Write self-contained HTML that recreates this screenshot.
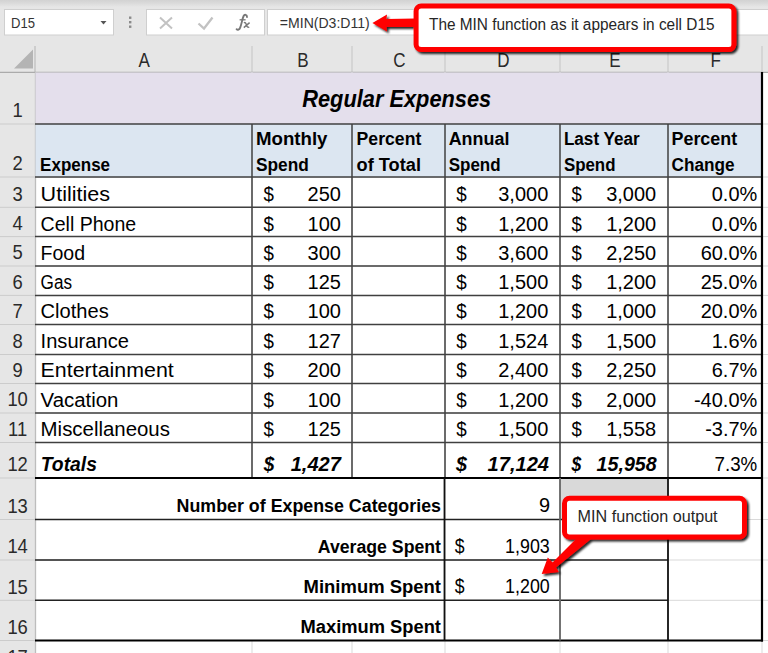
<!DOCTYPE html>
<html><head><meta charset="utf-8"><title>Regular Expenses</title>
<style>html,body{margin:0;padding:0;background:#fff;width:768px;height:653px;overflow:hidden}svg{display:block}</style>
</head><body>
<svg width="768" height="653" viewBox="0 0 768 653" font-family="Liberation Sans, sans-serif">
<defs><linearGradient id="tg" x1="0" y1="0" x2="0" y2="1"><stop offset="0" stop-color="#d2d2d2"/><stop offset="0.35" stop-color="#d8d8d8"/><stop offset="1" stop-color="#e6e6e6"/></linearGradient><filter id="sh" x="-10%" y="-30%" width="130%" height="170%"><feGaussianBlur in="SourceAlpha" stdDeviation="1.1"/><feOffset dx="1.6" dy="1.8" result="b"/><feFlood flood-color="#000" flood-opacity="0.85"/><feComposite in2="b" operator="in"/><feMerge><feMergeNode/><feMergeNode in="SourceGraphic"/></feMerge></filter></defs>
<rect x="0" y="0" width="768" height="653" fill="#e6e6e6"/>
<rect x="0" y="0" width="768" height="7" fill="url(#tg)"/>
<rect x="35" y="72" width="733" height="581" fill="#ffffff"/>
<rect x="4.5" y="9.5" width="109" height="25.5" fill="#ffffff" stroke="#cfcfcf" stroke-width="1"/>
<rect x="146.5" y="9.5" width="118" height="25.5" fill="#ffffff" stroke="#cfcfcf" stroke-width="1"/>
<rect x="267.5" y="9.5" width="510" height="25.5" fill="#ffffff" stroke="#cfcfcf" stroke-width="1"/>
<path d="M100.5,21 L106.5,21 L103.5,24.5 Z" fill="#555"/>
<rect x="129" y="16.5" width="2.4" height="2.4" fill="#8a8a8a"/>
<rect x="129" y="21" width="2.4" height="2.4" fill="#8a8a8a"/>
<rect x="129" y="25.5" width="2.4" height="2.4" fill="#8a8a8a"/>
<path d="M160,17.5 L172,28.5 M172,17.5 L160,28.5" stroke="#c2c2c2" stroke-width="2" fill="none"/>
<path d="M198.5,23.5 L204,28.5 L212.5,17.5" stroke="#c2c2c2" stroke-width="2.3" fill="none"/>
<path d="M247,17 C247,14.6 244.6,14 243.6,16 C242.4,18.4 241.6,24 240.2,27.6 C239.3,29.8 237.6,30.4 236.6,29.2" stroke="#787878" stroke-width="1.9" fill="none" stroke-linecap="round"/>
<path d="M239.6,19.8 L245.6,19.8" stroke="#787878" stroke-width="1.3" fill="none"/>
<path d="M243.9,22.8 C245.3,22 246,23.2 246.5,25 C247,26.8 247.8,27.8 249.3,27 M249.6,22.6 L243.8,27.6" stroke="#787878" stroke-width="1.4" fill="none"/>
<text x="11.00" y="27.70" font-size="14.60" fill="#333" textLength="23.99" lengthAdjust="spacingAndGlyphs">D15</text>
<text x="279.80" y="27.50" font-size="14.60" fill="#333" textLength="89.99" lengthAdjust="spacingAndGlyphs">=MIN(D3:D11)</text>
<line x1="252" y1="46" x2="252" y2="72" stroke="#c4c4c4" stroke-width="1"/>
<line x1="352" y1="46" x2="352" y2="72" stroke="#c4c4c4" stroke-width="1"/>
<line x1="445" y1="46" x2="445" y2="72" stroke="#c4c4c4" stroke-width="1"/>
<line x1="560" y1="46" x2="560" y2="72" stroke="#c4c4c4" stroke-width="1"/>
<line x1="668" y1="46" x2="668" y2="72" stroke="#c4c4c4" stroke-width="1"/>
<line x1="762" y1="46" x2="762" y2="72" stroke="#c4c4c4" stroke-width="1"/>
<line x1="35" y1="46" x2="35" y2="72" stroke="#bdbdbd" stroke-width="1.2"/>
<line x1="0" y1="72.4" x2="768" y2="72.4" stroke="#ababab" stroke-width="1.3"/>
<path d="M33,49.5 L33,68.5 L14,68.5 Z" fill="#b4b4b4"/>
<text x="138.60" y="66.80" font-size="19.80" fill="#2a2a2a" textLength="11.36" lengthAdjust="spacingAndGlyphs">A</text>
<text x="297.14" y="66.80" font-size="19.80" fill="#2a2a2a" textLength="11.36" lengthAdjust="spacingAndGlyphs">B</text>
<text x="393.17" y="66.80" font-size="19.80" fill="#2a2a2a" textLength="12.30" lengthAdjust="spacingAndGlyphs">C</text>
<text x="497.17" y="66.80" font-size="19.80" fill="#2a2a2a" textLength="12.30" lengthAdjust="spacingAndGlyphs">D</text>
<text x="609.14" y="66.80" font-size="19.80" fill="#2a2a2a" textLength="11.36" lengthAdjust="spacingAndGlyphs">E</text>
<text x="710.61" y="66.80" font-size="19.80" fill="#2a2a2a" textLength="10.40" lengthAdjust="spacingAndGlyphs">F</text>
<line x1="35.5" y1="72" x2="35.5" y2="653" stroke="#bdbdbd" stroke-width="1.3"/>
<line x1="0" y1="124" x2="35" y2="124" stroke="#cccccc" stroke-width="1"/>
<line x1="0" y1="177" x2="35" y2="177" stroke="#cccccc" stroke-width="1"/>
<line x1="0" y1="207.3" x2="35" y2="207.3" stroke="#cccccc" stroke-width="1"/>
<line x1="0" y1="236.6" x2="35" y2="236.6" stroke="#cccccc" stroke-width="1"/>
<line x1="0" y1="266" x2="35" y2="266" stroke="#cccccc" stroke-width="1"/>
<line x1="0" y1="295.4" x2="35" y2="295.4" stroke="#cccccc" stroke-width="1"/>
<line x1="0" y1="324.5" x2="35" y2="324.5" stroke="#cccccc" stroke-width="1"/>
<line x1="0" y1="354.5" x2="35" y2="354.5" stroke="#cccccc" stroke-width="1"/>
<line x1="0" y1="383.5" x2="35" y2="383.5" stroke="#cccccc" stroke-width="1"/>
<line x1="0" y1="413" x2="35" y2="413" stroke="#cccccc" stroke-width="1"/>
<line x1="0" y1="442.5" x2="35" y2="442.5" stroke="#cccccc" stroke-width="1"/>
<line x1="0" y1="478" x2="35" y2="478" stroke="#cccccc" stroke-width="1"/>
<line x1="0" y1="519.5" x2="35" y2="519.5" stroke="#cccccc" stroke-width="1"/>
<line x1="0" y1="560" x2="35" y2="560" stroke="#cccccc" stroke-width="1"/>
<line x1="0" y1="600.3" x2="35" y2="600.3" stroke="#cccccc" stroke-width="1"/>
<line x1="0" y1="640.5" x2="35" y2="640.5" stroke="#cccccc" stroke-width="1"/>
<line x1="0" y1="670.3" x2="35" y2="670.3" stroke="#cccccc" stroke-width="1"/>
<text x="12.49" y="117.40" font-size="19.80" fill="#2a2a2a" textLength="10.24" lengthAdjust="spacingAndGlyphs">1</text>
<text x="12.49" y="170.40" font-size="19.80" fill="#2a2a2a" textLength="10.24" lengthAdjust="spacingAndGlyphs">2</text>
<text x="12.49" y="200.70" font-size="19.80" fill="#2a2a2a" textLength="10.24" lengthAdjust="spacingAndGlyphs">3</text>
<text x="12.49" y="230.00" font-size="19.80" fill="#2a2a2a" textLength="10.24" lengthAdjust="spacingAndGlyphs">4</text>
<text x="12.49" y="259.40" font-size="19.80" fill="#2a2a2a" textLength="10.24" lengthAdjust="spacingAndGlyphs">5</text>
<text x="12.49" y="288.80" font-size="19.80" fill="#2a2a2a" textLength="10.24" lengthAdjust="spacingAndGlyphs">6</text>
<text x="12.49" y="317.90" font-size="19.80" fill="#2a2a2a" textLength="10.24" lengthAdjust="spacingAndGlyphs">7</text>
<text x="12.49" y="347.90" font-size="19.80" fill="#2a2a2a" textLength="10.24" lengthAdjust="spacingAndGlyphs">8</text>
<text x="12.49" y="376.90" font-size="19.80" fill="#2a2a2a" textLength="10.24" lengthAdjust="spacingAndGlyphs">9</text>
<text x="7.38" y="406.40" font-size="19.80" fill="#2a2a2a" textLength="20.48" lengthAdjust="spacingAndGlyphs">10</text>
<text x="8.02" y="435.90" font-size="19.80" fill="#2a2a2a" textLength="19.12" lengthAdjust="spacingAndGlyphs">11</text>
<text x="7.38" y="471.40" font-size="19.80" fill="#2a2a2a" textLength="20.48" lengthAdjust="spacingAndGlyphs">12</text>
<text x="7.38" y="512.90" font-size="19.80" fill="#2a2a2a" textLength="20.48" lengthAdjust="spacingAndGlyphs">13</text>
<text x="7.38" y="553.40" font-size="19.80" fill="#2a2a2a" textLength="20.48" lengthAdjust="spacingAndGlyphs">14</text>
<text x="7.38" y="593.70" font-size="19.80" fill="#2a2a2a" textLength="20.48" lengthAdjust="spacingAndGlyphs">15</text>
<text x="7.38" y="633.90" font-size="19.80" fill="#2a2a2a" textLength="20.48" lengthAdjust="spacingAndGlyphs">16</text>
<text x="7.38" y="663.70" font-size="19.80" fill="#2a2a2a" textLength="20.48" lengthAdjust="spacingAndGlyphs">17</text>
<line x1="35" y1="124" x2="768" y2="124" stroke="#d9d9d9" stroke-width="1"/>
<line x1="35" y1="177" x2="768" y2="177" stroke="#d9d9d9" stroke-width="1"/>
<line x1="35" y1="207.3" x2="768" y2="207.3" stroke="#d9d9d9" stroke-width="1"/>
<line x1="35" y1="236.6" x2="768" y2="236.6" stroke="#d9d9d9" stroke-width="1"/>
<line x1="35" y1="266" x2="768" y2="266" stroke="#d9d9d9" stroke-width="1"/>
<line x1="35" y1="295.4" x2="768" y2="295.4" stroke="#d9d9d9" stroke-width="1"/>
<line x1="35" y1="324.5" x2="768" y2="324.5" stroke="#d9d9d9" stroke-width="1"/>
<line x1="35" y1="354.5" x2="768" y2="354.5" stroke="#d9d9d9" stroke-width="1"/>
<line x1="35" y1="383.5" x2="768" y2="383.5" stroke="#d9d9d9" stroke-width="1"/>
<line x1="35" y1="413" x2="768" y2="413" stroke="#d9d9d9" stroke-width="1"/>
<line x1="35" y1="442.5" x2="768" y2="442.5" stroke="#d9d9d9" stroke-width="1"/>
<line x1="35" y1="478" x2="768" y2="478" stroke="#d9d9d9" stroke-width="1"/>
<line x1="35" y1="519.5" x2="768" y2="519.5" stroke="#d9d9d9" stroke-width="1"/>
<line x1="35" y1="560" x2="768" y2="560" stroke="#d9d9d9" stroke-width="1"/>
<line x1="35" y1="600.3" x2="768" y2="600.3" stroke="#d9d9d9" stroke-width="1"/>
<line x1="35" y1="640.5" x2="768" y2="640.5" stroke="#d9d9d9" stroke-width="1"/>
<line x1="35" y1="670.3" x2="768" y2="670.3" stroke="#d9d9d9" stroke-width="1"/>
<line x1="252" y1="72" x2="252" y2="478" stroke="#d9d9d9" stroke-width="1"/>
<line x1="252" y1="641" x2="252" y2="653" stroke="#d9d9d9" stroke-width="1"/>
<line x1="352" y1="72" x2="352" y2="478" stroke="#d9d9d9" stroke-width="1"/>
<line x1="352" y1="641" x2="352" y2="653" stroke="#d9d9d9" stroke-width="1"/>
<line x1="445" y1="72" x2="445" y2="653" stroke="#d9d9d9" stroke-width="1"/>
<line x1="560" y1="72" x2="560" y2="653" stroke="#d9d9d9" stroke-width="1"/>
<line x1="668" y1="72" x2="668" y2="653" stroke="#d9d9d9" stroke-width="1"/>
<line x1="762" y1="72" x2="762" y2="653" stroke="#d9d9d9" stroke-width="1"/>
<rect x="35.5" y="72.5" width="726.5" height="51.5" fill="#e4dfec"/>
<rect x="35.5" y="124" width="726.5" height="53" fill="#dce6f1"/>
<rect x="560" y="478" width="108" height="41.5" fill="#d9d9d9"/>
<line x1="35" y1="124" x2="762" y2="124" stroke="#404040" stroke-width="1.6"/>
<line x1="35" y1="177" x2="762" y2="177" stroke="#404040" stroke-width="1.6"/>
<line x1="35" y1="207.3" x2="762" y2="207.3" stroke="#404040" stroke-width="1.5"/>
<line x1="35" y1="236.6" x2="762" y2="236.6" stroke="#404040" stroke-width="1.5"/>
<line x1="35" y1="266" x2="762" y2="266" stroke="#404040" stroke-width="1.5"/>
<line x1="35" y1="295.4" x2="762" y2="295.4" stroke="#404040" stroke-width="1.5"/>
<line x1="35" y1="324.5" x2="762" y2="324.5" stroke="#404040" stroke-width="1.5"/>
<line x1="35" y1="354.5" x2="762" y2="354.5" stroke="#404040" stroke-width="1.5"/>
<line x1="35" y1="383.5" x2="762" y2="383.5" stroke="#404040" stroke-width="1.5"/>
<line x1="35" y1="413" x2="762" y2="413" stroke="#404040" stroke-width="1.5"/>
<line x1="35" y1="442.5" x2="762" y2="442.5" stroke="#404040" stroke-width="1.5"/>
<line x1="252" y1="124" x2="252" y2="478" stroke="#404040" stroke-width="1.5"/>
<line x1="352" y1="124" x2="352" y2="478" stroke="#404040" stroke-width="1.5"/>
<line x1="445" y1="124" x2="445" y2="478" stroke="#404040" stroke-width="1.5"/>
<line x1="560" y1="124" x2="560" y2="478" stroke="#404040" stroke-width="1.5"/>
<line x1="668" y1="124" x2="668" y2="478" stroke="#404040" stroke-width="1.5"/>
<line x1="35" y1="478" x2="763" y2="478" stroke="#000" stroke-width="2.2"/>
<line x1="35" y1="640.5" x2="763" y2="640.5" stroke="#000" stroke-width="2.2"/>
<line x1="35" y1="519.5" x2="668" y2="519.5" stroke="#222" stroke-width="1.6"/>
<line x1="35" y1="560" x2="668" y2="560" stroke="#222" stroke-width="1.6"/>
<line x1="35" y1="600.3" x2="668" y2="600.3" stroke="#222" stroke-width="1.6"/>
<line x1="444.5" y1="478" x2="444.5" y2="640.5" stroke="#111" stroke-width="1.8"/>
<line x1="560" y1="478" x2="560" y2="640.5" stroke="#666" stroke-width="1.8"/>
<line x1="668" y1="478" x2="668" y2="640.5" stroke="#111" stroke-width="1.8"/>
<line x1="762" y1="72" x2="762" y2="641.5" stroke="#000" stroke-width="2.2"/>
<text x="302.25" y="107.00" font-size="23.60" font-weight="bold" font-style="italic" fill="#000" textLength="188.96" lengthAdjust="spacingAndGlyphs">Regular Expenses</text>
<text x="40.10" y="171.10" font-size="18.80" font-weight="bold" fill="#000" textLength="69.97" lengthAdjust="spacingAndGlyphs">Expense</text>
<text x="256.00" y="145.00" font-size="18.80" font-weight="bold" fill="#000" textLength="71.46" lengthAdjust="spacingAndGlyphs">Monthly</text>
<text x="256.00" y="170.60" font-size="18.80" font-weight="bold" fill="#000" textLength="52.85" lengthAdjust="spacingAndGlyphs">Spend</text>
<text x="356.60" y="145.00" font-size="18.80" font-weight="bold" fill="#000" textLength="64.68" lengthAdjust="spacingAndGlyphs">Percent</text>
<text x="356.60" y="170.60" font-size="18.80" font-weight="bold" fill="#000" textLength="64.42" lengthAdjust="spacingAndGlyphs">of Total</text>
<text x="448.70" y="145.00" font-size="18.80" font-weight="bold" fill="#000" textLength="60.68" lengthAdjust="spacingAndGlyphs">Annual</text>
<text x="448.70" y="170.60" font-size="18.80" font-weight="bold" fill="#000" textLength="51.91" lengthAdjust="spacingAndGlyphs">Spend</text>
<text x="563.90" y="145.00" font-size="18.80" font-weight="bold" fill="#000" textLength="75.79" lengthAdjust="spacingAndGlyphs">Last Year</text>
<text x="563.90" y="170.60" font-size="18.80" font-weight="bold" fill="#000" textLength="51.61" lengthAdjust="spacingAndGlyphs">Spend</text>
<text x="671.50" y="145.00" font-size="18.80" font-weight="bold" fill="#000" textLength="65.67" lengthAdjust="spacingAndGlyphs">Percent</text>
<text x="671.50" y="170.60" font-size="18.80" font-weight="bold" fill="#000" textLength="63.04" lengthAdjust="spacingAndGlyphs">Change</text>
<text x="40.60" y="201.20" font-size="19.40" fill="#000" textLength="69.45" lengthAdjust="spacingAndGlyphs">Utilities</text>
<text x="263.60" y="201.20" font-size="19.40" fill="#000" textLength="10.42" lengthAdjust="spacingAndGlyphs">$</text>
<text x="307.63" y="201.20" font-size="19.40" fill="#000" textLength="33.34" lengthAdjust="spacingAndGlyphs">250</text>
<text x="456.25" y="201.20" font-size="19.40" fill="#000" textLength="10.47" lengthAdjust="spacingAndGlyphs">$</text>
<text x="498.25" y="201.20" font-size="19.40" fill="#000" textLength="50.00" lengthAdjust="spacingAndGlyphs">3,000</text>
<text x="571.40" y="201.20" font-size="19.40" fill="#000" textLength="10.32" lengthAdjust="spacingAndGlyphs">$</text>
<text x="606.15" y="201.20" font-size="19.40" fill="#000" textLength="50.00" lengthAdjust="spacingAndGlyphs">3,000</text>
<text x="711.74" y="201.20" font-size="19.40" fill="#000" textLength="45.54" lengthAdjust="spacingAndGlyphs">0.0%</text>
<text x="40.60" y="230.50" font-size="19.40" fill="#000" textLength="95.64" lengthAdjust="spacingAndGlyphs">Cell Phone</text>
<text x="263.60" y="230.50" font-size="19.40" fill="#000" textLength="10.42" lengthAdjust="spacingAndGlyphs">$</text>
<text x="307.63" y="230.50" font-size="19.40" fill="#000" textLength="33.34" lengthAdjust="spacingAndGlyphs">100</text>
<text x="456.25" y="230.50" font-size="19.40" fill="#000" textLength="10.47" lengthAdjust="spacingAndGlyphs">$</text>
<text x="498.25" y="230.50" font-size="19.40" fill="#000" textLength="50.00" lengthAdjust="spacingAndGlyphs">1,200</text>
<text x="571.40" y="230.50" font-size="19.40" fill="#000" textLength="10.32" lengthAdjust="spacingAndGlyphs">$</text>
<text x="606.15" y="230.50" font-size="19.40" fill="#000" textLength="50.00" lengthAdjust="spacingAndGlyphs">1,200</text>
<text x="711.74" y="230.50" font-size="19.40" fill="#000" textLength="45.54" lengthAdjust="spacingAndGlyphs">0.0%</text>
<text x="40.60" y="259.90" font-size="19.40" fill="#000" textLength="44.49" lengthAdjust="spacingAndGlyphs">Food</text>
<text x="263.60" y="259.90" font-size="19.40" fill="#000" textLength="10.42" lengthAdjust="spacingAndGlyphs">$</text>
<text x="307.63" y="259.90" font-size="19.40" fill="#000" textLength="33.34" lengthAdjust="spacingAndGlyphs">300</text>
<text x="456.25" y="259.90" font-size="19.40" fill="#000" textLength="10.47" lengthAdjust="spacingAndGlyphs">$</text>
<text x="498.25" y="259.90" font-size="19.40" fill="#000" textLength="50.00" lengthAdjust="spacingAndGlyphs">3,600</text>
<text x="571.40" y="259.90" font-size="19.40" fill="#000" textLength="10.32" lengthAdjust="spacingAndGlyphs">$</text>
<text x="606.15" y="259.90" font-size="19.40" fill="#000" textLength="50.00" lengthAdjust="spacingAndGlyphs">2,250</text>
<text x="700.65" y="259.90" font-size="19.40" fill="#000" textLength="56.66" lengthAdjust="spacingAndGlyphs">60.0%</text>
<text x="40.60" y="289.30" font-size="19.40" fill="#000" textLength="31.38" lengthAdjust="spacingAndGlyphs">Gas</text>
<text x="263.60" y="289.30" font-size="19.40" fill="#000" textLength="10.42" lengthAdjust="spacingAndGlyphs">$</text>
<text x="307.63" y="289.30" font-size="19.40" fill="#000" textLength="33.34" lengthAdjust="spacingAndGlyphs">125</text>
<text x="456.25" y="289.30" font-size="19.40" fill="#000" textLength="10.47" lengthAdjust="spacingAndGlyphs">$</text>
<text x="498.25" y="289.30" font-size="19.40" fill="#000" textLength="50.00" lengthAdjust="spacingAndGlyphs">1,500</text>
<text x="571.40" y="289.30" font-size="19.40" fill="#000" textLength="10.32" lengthAdjust="spacingAndGlyphs">$</text>
<text x="606.15" y="289.30" font-size="19.40" fill="#000" textLength="50.00" lengthAdjust="spacingAndGlyphs">1,200</text>
<text x="700.65" y="289.30" font-size="19.40" fill="#000" textLength="56.66" lengthAdjust="spacingAndGlyphs">25.0%</text>
<text x="40.60" y="318.40" font-size="19.40" fill="#000" textLength="68.11" lengthAdjust="spacingAndGlyphs">Clothes</text>
<text x="263.60" y="318.40" font-size="19.40" fill="#000" textLength="10.42" lengthAdjust="spacingAndGlyphs">$</text>
<text x="307.63" y="318.40" font-size="19.40" fill="#000" textLength="33.34" lengthAdjust="spacingAndGlyphs">100</text>
<text x="456.25" y="318.40" font-size="19.40" fill="#000" textLength="10.47" lengthAdjust="spacingAndGlyphs">$</text>
<text x="498.25" y="318.40" font-size="19.40" fill="#000" textLength="50.00" lengthAdjust="spacingAndGlyphs">1,200</text>
<text x="571.40" y="318.40" font-size="19.40" fill="#000" textLength="10.32" lengthAdjust="spacingAndGlyphs">$</text>
<text x="606.15" y="318.40" font-size="19.40" fill="#000" textLength="50.00" lengthAdjust="spacingAndGlyphs">1,000</text>
<text x="700.65" y="318.40" font-size="19.40" fill="#000" textLength="56.66" lengthAdjust="spacingAndGlyphs">20.0%</text>
<text x="40.60" y="348.40" font-size="19.40" fill="#000" textLength="88.33" lengthAdjust="spacingAndGlyphs">Insurance</text>
<text x="263.60" y="348.40" font-size="19.40" fill="#000" textLength="10.42" lengthAdjust="spacingAndGlyphs">$</text>
<text x="307.63" y="348.40" font-size="19.40" fill="#000" textLength="33.34" lengthAdjust="spacingAndGlyphs">127</text>
<text x="456.25" y="348.40" font-size="19.40" fill="#000" textLength="10.47" lengthAdjust="spacingAndGlyphs">$</text>
<text x="498.25" y="348.40" font-size="19.40" fill="#000" textLength="50.00" lengthAdjust="spacingAndGlyphs">1,524</text>
<text x="571.40" y="348.40" font-size="19.40" fill="#000" textLength="10.32" lengthAdjust="spacingAndGlyphs">$</text>
<text x="606.15" y="348.40" font-size="19.40" fill="#000" textLength="50.00" lengthAdjust="spacingAndGlyphs">1,500</text>
<text x="711.74" y="348.40" font-size="19.40" fill="#000" textLength="45.54" lengthAdjust="spacingAndGlyphs">1.6%</text>
<text x="40.60" y="377.40" font-size="19.40" fill="#000" textLength="133.12" lengthAdjust="spacingAndGlyphs">Entertainment</text>
<text x="263.60" y="377.40" font-size="19.40" fill="#000" textLength="10.42" lengthAdjust="spacingAndGlyphs">$</text>
<text x="307.63" y="377.40" font-size="19.40" fill="#000" textLength="33.34" lengthAdjust="spacingAndGlyphs">200</text>
<text x="456.25" y="377.40" font-size="19.40" fill="#000" textLength="10.47" lengthAdjust="spacingAndGlyphs">$</text>
<text x="498.25" y="377.40" font-size="19.40" fill="#000" textLength="50.00" lengthAdjust="spacingAndGlyphs">2,400</text>
<text x="571.40" y="377.40" font-size="19.40" fill="#000" textLength="10.32" lengthAdjust="spacingAndGlyphs">$</text>
<text x="606.15" y="377.40" font-size="19.40" fill="#000" textLength="50.00" lengthAdjust="spacingAndGlyphs">2,250</text>
<text x="711.74" y="377.40" font-size="19.40" fill="#000" textLength="45.54" lengthAdjust="spacingAndGlyphs">6.7%</text>
<text x="40.60" y="406.90" font-size="19.40" fill="#000" textLength="77.85" lengthAdjust="spacingAndGlyphs">Vacation</text>
<text x="263.60" y="406.90" font-size="19.40" fill="#000" textLength="10.42" lengthAdjust="spacingAndGlyphs">$</text>
<text x="307.63" y="406.90" font-size="19.40" fill="#000" textLength="33.34" lengthAdjust="spacingAndGlyphs">100</text>
<text x="456.25" y="406.90" font-size="19.40" fill="#000" textLength="10.47" lengthAdjust="spacingAndGlyphs">$</text>
<text x="498.25" y="406.90" font-size="19.40" fill="#000" textLength="50.00" lengthAdjust="spacingAndGlyphs">1,200</text>
<text x="571.40" y="406.90" font-size="19.40" fill="#000" textLength="10.32" lengthAdjust="spacingAndGlyphs">$</text>
<text x="606.15" y="406.90" font-size="19.40" fill="#000" textLength="50.00" lengthAdjust="spacingAndGlyphs">2,000</text>
<text x="693.96" y="406.90" font-size="19.40" fill="#000" textLength="63.31" lengthAdjust="spacingAndGlyphs">-40.0%</text>
<text x="40.60" y="436.40" font-size="19.40" fill="#000" textLength="129.33" lengthAdjust="spacingAndGlyphs">Miscellaneous</text>
<text x="263.60" y="436.40" font-size="19.40" fill="#000" textLength="10.42" lengthAdjust="spacingAndGlyphs">$</text>
<text x="307.63" y="436.40" font-size="19.40" fill="#000" textLength="33.34" lengthAdjust="spacingAndGlyphs">125</text>
<text x="456.25" y="436.40" font-size="19.40" fill="#000" textLength="10.47" lengthAdjust="spacingAndGlyphs">$</text>
<text x="498.25" y="436.40" font-size="19.40" fill="#000" textLength="50.00" lengthAdjust="spacingAndGlyphs">1,500</text>
<text x="571.40" y="436.40" font-size="19.40" fill="#000" textLength="10.32" lengthAdjust="spacingAndGlyphs">$</text>
<text x="606.15" y="436.40" font-size="19.40" fill="#000" textLength="50.00" lengthAdjust="spacingAndGlyphs">1,558</text>
<text x="705.15" y="436.40" font-size="19.40" fill="#000" textLength="52.20" lengthAdjust="spacingAndGlyphs">-3.7%</text>
<text x="40.75" y="470.80" font-size="19.40" font-weight="bold" font-style="italic" fill="#000" textLength="56.21" lengthAdjust="spacingAndGlyphs">Totals</text>
<text x="263.79" y="470.80" font-size="19.40" font-weight="bold" font-style="italic" fill="#000" textLength="10.54" lengthAdjust="spacingAndGlyphs">$</text>
<text x="290.70" y="470.80" font-size="19.40" font-weight="bold" font-style="italic" fill="#000" textLength="50.15" lengthAdjust="spacingAndGlyphs">1,427</text>
<text x="456.10" y="470.80" font-size="19.40" font-weight="bold" font-style="italic" fill="#000" textLength="10.93" lengthAdjust="spacingAndGlyphs">$</text>
<text x="487.60" y="470.80" font-size="19.40" font-weight="bold" font-style="italic" fill="#000" textLength="61.37" lengthAdjust="spacingAndGlyphs">17,124</text>
<text x="571.58" y="470.80" font-size="19.40" font-weight="bold" font-style="italic" fill="#000" textLength="9.77" lengthAdjust="spacingAndGlyphs">$</text>
<text x="596.60" y="470.80" font-size="19.40" font-weight="bold" font-style="italic" fill="#000" textLength="60.07" lengthAdjust="spacingAndGlyphs">15,958</text>
<text x="714.50" y="470.80" font-size="19.40" fill="#000" textLength="42.79" lengthAdjust="spacingAndGlyphs">7.3%</text>
<text x="176.60" y="512.40" font-size="18.80" font-weight="bold" fill="#000" textLength="264.36" lengthAdjust="spacingAndGlyphs">Number of Expense Categories</text>
<text x="317.80" y="552.70" font-size="18.80" font-weight="bold" fill="#000" textLength="123.21" lengthAdjust="spacingAndGlyphs">Average Spent</text>
<text x="303.60" y="593.30" font-size="18.80" font-weight="bold" fill="#000" textLength="137.39" lengthAdjust="spacingAndGlyphs">Minimum Spent</text>
<text x="300.60" y="633.40" font-size="18.80" font-weight="bold" fill="#000" textLength="140.37" lengthAdjust="spacingAndGlyphs">Maximum Spent</text>
<text x="539.11" y="512.00" font-size="19.40" fill="#000" textLength="11.11" lengthAdjust="spacingAndGlyphs">9</text>
<text x="454.70" y="552.70" font-size="19.40" fill="#000" textLength="9.82" lengthAdjust="spacingAndGlyphs">$</text>
<text x="505.10" y="552.70" font-size="19.40" fill="#000" textLength="44.66" lengthAdjust="spacingAndGlyphs">1,903</text>
<text x="454.70" y="593.30" font-size="19.40" fill="#000" textLength="9.82" lengthAdjust="spacingAndGlyphs">$</text>
<text x="505.10" y="593.30" font-size="19.40" fill="#000" textLength="44.66" lengthAdjust="spacingAndGlyphs">1,200</text>
<g filter="url(#sh)">
<path d="M372.4,23 L387,14.5 L386.5,19 L416,18.5 L416,27 L386.5,27 L387,31.5 Z" fill="#ff0000"/>
<rect x="416.1" y="6" width="317.8" height="43.5" rx="5" ry="5" fill="#fff" stroke="#ff0000" stroke-width="5"/>
</g>
<text x="429.00" y="30.00" font-size="16.30" fill="#262626" textLength="285.50" lengthAdjust="spacingAndGlyphs">The MIN function as it appears in cell D15</text>
<g filter="url(#sh)">
<path d="M541.7,574 L547.8,557.5 L552.5,562.5 L576,539 L591,539 L556,567.5 L558.8,572 Z" fill="#ff0000"/>
<rect x="564.5" y="498.25" width="180" height="38.75" rx="5" ry="5" fill="#fff" stroke="#ff0000" stroke-width="5"/>
</g>
<text x="577.60" y="522.00" font-size="16.00" fill="#262626" textLength="140.02" lengthAdjust="spacingAndGlyphs">MIN function output</text>
</svg>
</body></html>
